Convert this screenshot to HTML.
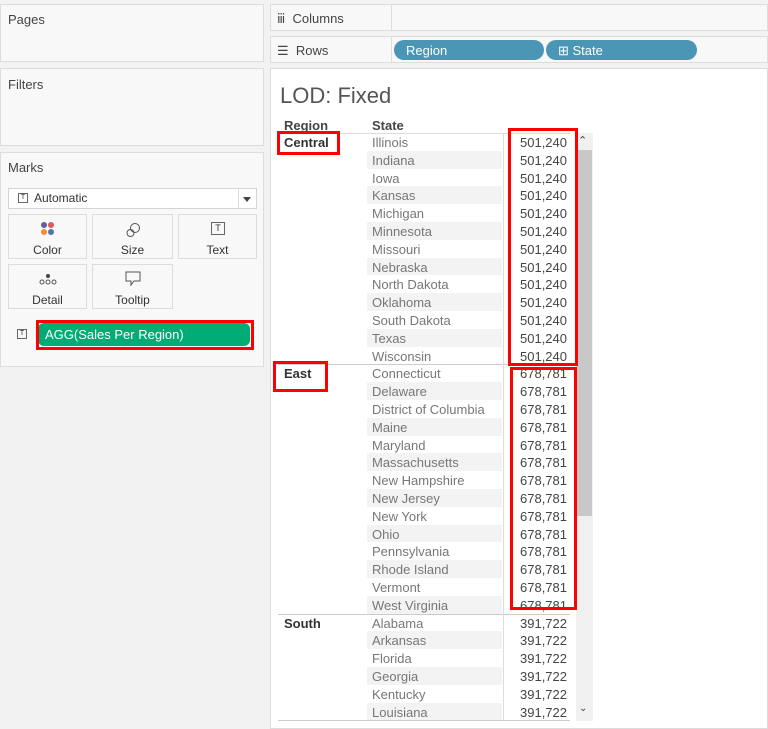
<!DOCTYPE html>
<html><head><meta charset="utf-8"><style>
*{margin:0;padding:0;box-sizing:border-box}
body{width:768px;height:729px;background:#f2f2f2;font-family:"Liberation Sans",sans-serif;position:relative;overflow:hidden;color:#333}
.a{position:absolute}
.panel{position:absolute;background:#f8f8f8;border:1px solid #dcdcdc}
.ttl{position:absolute;font-size:13px;color:#444}
.card{position:absolute;background:#f8f8f8;border:1px solid #dcdcdc;font-size:12px;color:#333;text-align:center}
.pill{position:absolute;height:20px;border-radius:10px;background:#4a96b4;color:#fff;font-size:13px;line-height:21px;padding-left:12px}
.red{position:absolute;border:3px solid #f00}
.row{position:absolute;height:17.8px;font-size:13px;line-height:19px}
</style></head><body>
<div class="panel" style="left:0;top:4px;width:264px;height:58px"></div>
<div class="ttl" style="left:8px;top:12px">Pages</div>
<div class="panel" style="left:0;top:68px;width:264px;height:78px"></div>
<div class="ttl" style="left:8px;top:77px">Filters</div>
<div class="panel" style="left:0;top:152px;width:264px;height:215px"></div>
<div class="ttl" style="left:8px;top:160px">Marks</div>
<div class="a" style="left:8px;top:188px;width:249px;height:21px;background:#fff;border:1px solid #d4d4d4"></div>
<div class="a" style="left:18px;top:193px;width:10px;height:10px;border:1px solid #666;font-size:7px;line-height:8px;text-align:center">T</div>
<div class="a" style="left:34px;top:191px;font-size:12px;color:#333">Automatic</div>
<div class="a" style="left:238px;top:189px;width:1px;height:19px;background:#ddd"></div>
<div class="a" style="left:243px;top:197px;border-left:4px solid transparent;border-right:4px solid transparent;border-top:5px solid #444"></div>
<div class="card" style="left:8px;top:214px;width:79px;height:45px"><div style="position:absolute;left:32px;top:7px;width:14px;height:14px">
<span class="a" style="left:0;top:0;width:6px;height:6px;border-radius:3px;background:#6b5b95"></span><span class="a" style="left:7px;top:0;width:6px;height:6px;border-radius:3px;background:#e15759"></span><span class="a" style="left:0;top:7px;width:6px;height:6px;border-radius:3px;background:#f28e2b"></span><span class="a" style="left:7px;top:7px;width:6px;height:6px;border-radius:3px;background:#4e79a7"></span></div><div style="position:absolute;left:0;right:0;top:28px">Color</div></div>
<div class="card" style="left:92px;top:214px;width:81px;height:45px"><svg class="a" style="left:32px;top:7px" width="16" height="16"><circle cx="10" cy="6" r="4.5" fill="none" stroke="#555"/><circle cx="5.5" cy="11" r="3.5" fill="none" stroke="#555"/></svg><div style="position:absolute;left:0;right:0;top:28px">Size</div></div>
<div class="card" style="left:178px;top:214px;width:79px;height:45px"><div class="a" style="left:32px;top:7px;width:14px;height:13px;border:1px solid #666;font-size:9px;line-height:11px">T</div><div style="position:absolute;left:0;right:0;top:28px">Text</div></div>
<div class="card" style="left:8px;top:264px;width:79px;height:45px"><svg class="a" style="left:30px;top:8px" width="18" height="12"><circle cx="9" cy="3" r="2" fill="#444"/><circle cx="3" cy="9" r="2" fill="none" stroke="#555"/><circle cx="9" cy="9" r="2" fill="none" stroke="#555"/><circle cx="15" cy="9" r="2" fill="none" stroke="#555"/></svg><div style="position:absolute;left:0;right:0;top:28px">Detail</div></div>
<div class="card" style="left:92px;top:264px;width:81px;height:45px"><svg class="a" style="left:32px;top:6px" width="17" height="16"><path d="M1 1H15V10H9L6 14V10H1Z" fill="none" stroke="#555"/></svg><div style="position:absolute;left:0;right:0;top:28px">Tooltip</div></div>
<div class="a" style="left:17px;top:329px;width:10px;height:10px;border:1px solid #666;font-size:7px;line-height:8px;text-align:center">T</div>
<div class="pill" style="left:38px;top:323px;width:212px;height:23px;line-height:23px;border-radius:6px;background:#00ab75;padding-left:7px">AGG(Sales Per Region)</div>
<div class="red" style="left:36px;top:320px;width:218px;height:30px"></div>
<div class="panel" style="left:270px;top:4px;width:498px;height:27px"></div>
<div class="a" style="left:391px;top:4px;width:1px;height:27px;background:#dcdcdc"></div>
<div class="ttl" style="left:277px;top:11px">ⅲ&nbsp; Columns</div>
<div class="panel" style="left:270px;top:36px;width:498px;height:27px"></div>
<div class="a" style="left:391px;top:36px;width:1px;height:27px;background:#dcdcdc"></div>
<div class="ttl" style="left:277px;top:43px">☰&nbsp; Rows</div>
<div class="pill" style="left:394px;top:40px;width:150px">Region</div>
<div class="pill" style="left:546px;top:40px;width:151px">⊞ State</div>
<div class="a" style="left:270px;top:68px;width:498px;height:661px;background:#fff;border:1px solid #dcdcdc"></div>
<div class="a" style="left:280px;top:83px;font-size:22px;color:#555">LOD: Fixed</div>
<div class="a" style="left:284px;top:118px;font-size:13px;font-weight:bold;color:#444">Region</div>
<div class="a" style="left:372px;top:118px;font-size:13px;font-weight:bold;color:#444">State</div>
<div class="a" style="left:278px;top:133px;width:292px;height:1px;background:#ddd"></div>
<div id="t"></div>
<div class="a" style="left:576px;top:133px;width:17px;height:588px;background:#f0f0f0"></div>
<div class="a" style="left:577px;top:150px;width:15px;height:366px;background:#c8c8c8"></div>
<div class="a" style="left:578px;top:134px;font-size:11px;color:#444">⌃</div>
<div class="a" style="left:579px;top:703px;font-size:10px;color:#444">⌄</div>
<div class="red" style="left:277px;top:131px;width:63px;height:24px"></div>
<div class="red" style="left:508px;top:128px;width:70px;height:238px"></div>
<div class="red" style="left:273px;top:361px;width:55px;height:31px"></div>
<div class="red" style="left:510px;top:367px;width:67px;height:243px"></div>
<script>
var g=[["Central","501,240",["Illinois","Indiana","Iowa","Kansas","Michigan","Minnesota","Missouri","Nebraska","North Dakota","Oklahoma","South Dakota","Texas","Wisconsin"]],
["East","678,781",["Connecticut","Delaware","District of Columbia","Maine","Maryland","Massachusetts","New Hampshire","New Jersey","New York","Ohio","Pennsylvania","Rhode Island","Vermont","West Virginia"]],
["South","391,722",["Alabama","Arkansas","Florida","Georgia","Kentucky","Louisiana"]]];
var h="",i=0;
g.forEach(function(r,gi){var y0=133+i*17.8;
if(gi>0)h+='<div class="a" style="left:278px;top:'+y0+'px;width:292px;height:1px;background:#ccc"></div>';
h+='<div class="row" style="left:284px;top:'+y0+'px;font-weight:bold;color:#333">'+r[0]+'</div>';
r[2].forEach(function(s,k){var y=133+i*17.8;var bg=(k%2==1)?'#f3f3f3':'transparent';
h+='<div class="row" style="left:367px;top:'+y+'px;width:135px;background:'+bg+';padding-left:5px;color:#777">'+s+'</div>';
h+='<div class="row" style="left:504px;top:'+y+'px;width:66px;text-align:right;padding-right:3px;color:#444">'+r[1]+'</div>';i++;});});
h+='<div class="a" style="left:503px;top:133px;width:1px;height:588px;background:#ddd"></div>';
h+='<div class="a" style="left:278px;top:720px;width:292px;height:1px;background:#ccc"></div>';
document.getElementById("t").innerHTML=h;
</script>
</body></html>
